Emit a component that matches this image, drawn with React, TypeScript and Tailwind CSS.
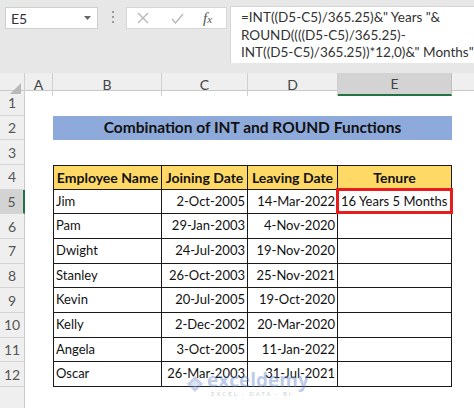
import React from "react";

const rows = [
  ["Jim", "2-Oct-2005", "14-Mar-2022", "16 Years 5 Months"],
  ["Pam", "29-Jan-2003", "4-Nov-2020", ""],
  ["Dwight", "24-Jul-2003", "19-Nov-2020", ""],
  ["Stanley", "26-Oct-2003", "25-Nov-2021", ""],
  ["Kevin", "20-Jul-2005", "19-Oct-2020", ""],
  ["Kelly", "2-Dec-2002", "20-Mar-2020", ""],
  ["Angela", "3-Oct-2005", "11-Jan-2022", ""],
  ["Oscar", "26-Mar-2003", "31-Jul-2021", ""],
];

const font = { fontFamily: "Lato, 'Open Sans', sans-serif" };

function RowHead({ n, sel }: { n: number | string; sel?: boolean }) {
  return (
    <div
      className={
        "flex items-center justify-center border-b border-[#d4d4d4] text-[14px] text-[#555] " +
        (sel ? "bg-[#d3d3d3] border-r-2 border-r-[#217346]" : "bg-[#efefef] border-r border-r-[#c8c8c8]")
      }
    >
      {n}
    </div>
  );
}

export default function App() {
  return (
    <div className="w-[474px] h-[408px] overflow-hidden bg-white relative" style={font}>
      {/* toolbar */}
      <div className="h-[73px] bg-[#e7e7e7] flex items-start">
        <div className="mt-[7px] ml-[5px] w-[93px] h-[22px] bg-white border border-[#cfcfcf] flex items-center justify-between px-[5px] text-[14px] text-[#333]">
          <span>E5</span>
          <svg width="7" height="4" viewBox="0 0 7 4" className="mr-[1px]">
            <path d="M0 0 L7 0 L3.5 4 Z" fill="#666" />
          </svg>
        </div>
        <div className="mt-[11px] ml-[13px] w-[3px] flex flex-col gap-[3px] items-center">
          <div className="w-[2px] h-[2px] bg-[#9a9a9a]" />
          <div className="w-[2px] h-[2px] bg-[#9a9a9a]" />
          <div className="w-[2px] h-[2px] bg-[#9a9a9a]" />
        </div>
        <div className="mt-[7px] ml-[12px] w-[101px] h-[22px] bg-white border border-[#d6d6d6] flex items-center">
          <svg width="12" height="12" viewBox="0 0 12 12" className="ml-[10px]">
            <path d="M1 1 L11 11 M11 1 L1 11" stroke="#b5b5b5" strokeWidth="1.3" fill="none" />
          </svg>
          <svg width="13" height="11" viewBox="0 0 13 11" className="ml-[22px]">
            <path d="M1 6 L4.5 10 L12 1" stroke="#b5b5b5" strokeWidth="1.3" fill="none" />
          </svg>
          <span className="ml-[19px] text-[15px] italic text-[#555]" style={{ fontFamily: "'Liberation Serif', serif" }}>
            f<span className="text-[11px]">x</span>
          </span>
        </div>
        <div className="mt-[6px] ml-[3px] flex-1 h-[57px] bg-white border-l border-t border-[#d6d6d6] pl-[10px] pt-[2px] text-[13.5px] leading-[17.5px] text-[#333] whitespace-nowrap">
          <div>=INT((D5-C5)/365.25)&amp;" Years "&amp;</div>
          <div>ROUND((((D5-C5)/365.25)-</div>
          <div>INT((D5-C5)/365.25))*12,0)&amp;" Months"</div>
        </div>
      </div>

      {/* column headers */}
      <div className="grid grid-cols-[25px_28px_109px_86px_90px_114px_1fr] h-[18px] bg-[#efefef] border-b border-[#c8c8c8] text-[14px] text-[#444]">
        <div className="relative border-r border-[#d0d0d0]">
          <svg width="11" height="11" viewBox="0 0 11 11" className="absolute right-[3px] bottom-[2px]">
            <path d="M11 0 L11 11 L0 11 Z" fill="#b9b9b9" />
          </svg>
        </div>
        <div className="flex items-center justify-center border-r border-[#d0d0d0]">A</div>
        <div className="flex items-center justify-center border-r border-[#d0d0d0]">B</div>
        <div className="flex items-center justify-center border-r border-[#d0d0d0]">C</div>
        <div className="flex items-center justify-center border-r border-[#d0d0d0]">D</div>
        <div className="flex items-center justify-center bg-[#d3d3d3] border-r border-[#c0c0c0] border-b-2 border-b-[#217346]">E</div>
        <div />
      </div>

      {/* sheet body */}
      <div className="grid grid-cols-[25px_28px_109px_86px_90px_114px_1fr] auto-rows-[24.67px] text-[13px] text-[#111] whitespace-nowrap">
        {/* row 1 */}
        <RowHead n={1} />
        <div className="col-span-6" />
        {/* row 2 */}
        <RowHead n={2} />
        <div />
        <div className="col-span-4 bg-[#8eaadb] flex items-center justify-center font-bold text-[15.5px] text-[#111]">
          Combination of INT and ROUND Functions
        </div>
        <div />
        {/* row 3 */}
        <RowHead n={3} />
        <div className="col-span-6" />
        {/* row 4 header */}
        <RowHead n={4} />
        <div />
        {["Employee Name", "Joining Date", "Leaving Date", "Tenure"].map((h, i) => (
          <div
            key={h}
            className={
              "bg-[#ffd966] border-t border-r border-b border-[#1a1a1a] flex items-center justify-center font-bold text-[14px] " +
              (i === 0 ? "border-l" : "")
            }
          >
            {h}
          </div>
        ))}
        <div />
        {rows.map((r, idx) => (
          <React.Fragment key={r[0]}>
            <RowHead n={idx + 5} sel={idx === 0} />
            <div />
            <div className="border-l border-r border-b border-[#1a1a1a] flex items-center pl-[2px]">{r[0]}</div>
            <div className="border-r border-b border-[#1a1a1a] flex items-center justify-end pr-[2px]">{r[1]}</div>
            <div className="border-r border-b border-[#1a1a1a] flex items-center justify-end pr-[2px]">{r[2]}</div>
            <div className="relative border-r border-b border-[#1a1a1a] flex items-center pl-[3px]">
              {r[3]}
              {idx === 0 && (
                <div className="absolute -left-[2px] -top-[2px] -right-[2px] -bottom-[1px] border-[3px] border-[#e81c1c]" />
              )}
            </div>
            <div />
          </React.Fragment>
        ))}
        <RowHead n="" />
        <div className="col-span-6" />
      </div>

      {/* watermark */}
      <div className="absolute left-[186px] top-[371px] flex items-center gap-[3px] opacity-40 pointer-events-none">
        <svg width="18" height="18" viewBox="0 0 18 18">
          <path d="M1 9 L9 1 L17 9 L9 17 Z" fill="#6f8fd0" />
          <path d="M5 9 L9 5 L13 9 L9 13 Z" fill="#a9bde6" />
        </svg>
        <div className="flex flex-col leading-none">
          <span className="text-[19px] text-[#5d7fc8] font-bold" style={{ fontFamily: "'Open Sans', sans-serif" }}>
            exceldemy
          </span>
          <span className="text-[6px] tracking-[2px] text-[#8a8a8a] ml-[4px] mt-[1px]">EXCEL · DATA · BI</span>
        </div>
      </div>
    </div>
  );
}
